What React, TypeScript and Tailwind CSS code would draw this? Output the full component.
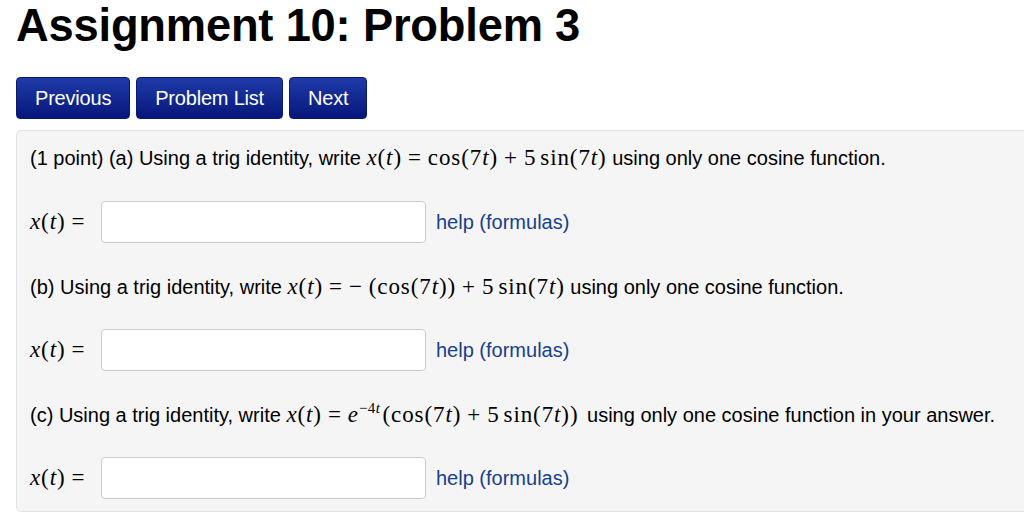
import React from "react";

const sans = "font-['Liberation_Sans','Helvetica','Arial',sans-serif]";
const serif = "font-['Liberation_Serif','Times_New_Roman',serif]";

function V({ children }: { children: React.ReactNode }) {
  return <span className="italic">{children}</span>;
}

function Op({ children }: { children: React.ReactNode }) {
  return <span className="mx-[6px]">{children}</span>;
}

function Math({ children }: { children: React.ReactNode }) {
  return (
    <span className={`${serif} text-[23px] tracking-[0.9px] whitespace-nowrap`}>
      {children}
    </span>
  );
}

function Xt() {
  return (
    <>
      <V>x</V>(<V>t</V>)
    </>
  );
}

function Cos7t() {
  return (
    <>
      cos(7<V>t</V>)
    </>
  );
}

function Sin7t() {
  return (
    <>
      5<span className="ml-[4px]">sin(7<V>t</V>)</span>
    </>
  );
}

function AnswerRow() {
  return (
    <div className="flex items-center h-[42px]">
      <span className="w-[71px]">
        <Math>
          <Xt />
          <Op>=</Op>
        </Math>
      </span>
      <input
        type="text"
        className="w-[325px] h-[42px] bg-white border border-[#cccccc] rounded-[4px] outline-none px-2"
      />
      <a href="#" className="ml-[10px] text-[20px] text-[#15408f]">
        help (formulas)
      </a>
    </div>
  );
}

export default function App() {
  const buttons = ["Previous", "Problem List", "Next"];
  return (
    <div className={`${sans} bg-white w-[1024px] h-[513px] overflow-hidden text-black`}>
      <h1 className="pl-[16px] text-[45.3px] leading-[51px] font-bold tracking-[-0.2px]">
        Assignment 10: Problem 3
      </h1>
      <div className="flex gap-[6px] pl-[16px] mt-[26px]">
        {buttons.map((label) => (
          <button
            key={label}
            className="h-[42px] px-[18px] rounded-[4px] border border-[#0a1a6e] bg-gradient-to-b from-[#1f3aa8] to-[#07167a] text-white text-[20px] tracking-[-0.2px]"
          >
            {label}
          </button>
        ))}
      </div>
      <div className="ml-[16px] mt-[11px] w-[1020px] h-[382px] bg-[#f5f5f5] border border-[#e3e3e3] rounded-l-[5px] pl-[13px] pt-[13px] text-[20px]">
        <p className="h-[28px] leading-[28px]">
          (1 point) (a) Using a trig identity, write{" "}
          <Math>
            <Xt />
            <Op>=</Op>
            <Cos7t />
            <Op>+</Op>
            <Sin7t />
          </Math>{" "}
          using only one cosine function.
        </p>
        <div className="mt-[29px]">
          <AnswerRow />
        </div>
        <p className="h-[28px] leading-[28px] mt-[30px]">
          (b) Using a trig identity, write{" "}
          <Math>
            <Xt />
            <Op>=</Op>−<span className="ml-[6px]">(</span>
            <Cos7t />)
            <Op>+</Op>
            <Sin7t />
          </Math>{" "}
          using only one cosine function.
        </p>
        <div className="mt-[28px]">
          <AnswerRow />
        </div>
        <p className="h-[28px] leading-[28px] mt-[30px]">
          (c) Using a trig identity, write{" "}
          <Math>
            <Xt />
            <Op>=</Op>
            <V>e</V>
            <sup className="text-[15px] top-[-0.6em] tracking-[0.5px] mr-[2px]">
              −4<V>t</V>
            </sup>
            (<Cos7t />
            <Op>+</Op>
            <Sin7t />)
          </Math>{" "}
          <span className="ml-[3px]">using only one cosine function in your answer.</span>
        </p>
        <div className="mt-[28px]">
          <AnswerRow />
        </div>
      </div>
    </div>
  );
}
